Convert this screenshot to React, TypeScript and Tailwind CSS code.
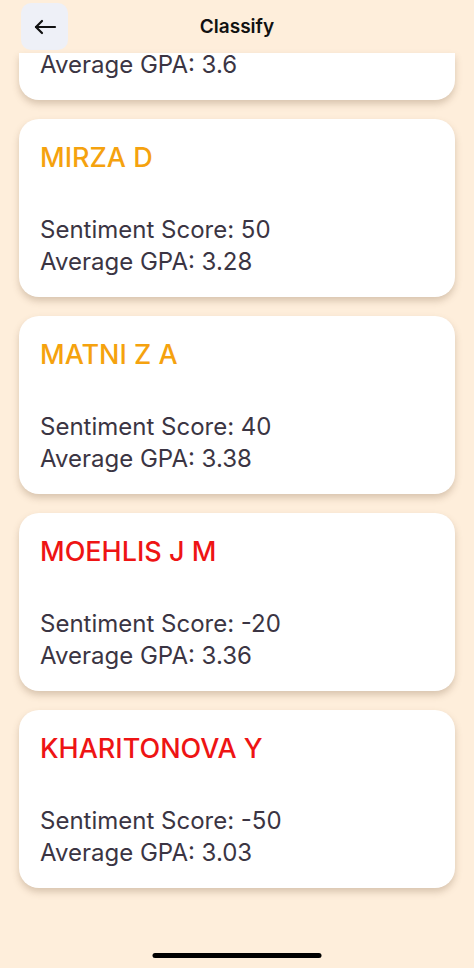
import React from "react";

const items = [
  { name: "MIRZA D", score: 50, gpa: "3.28", color: "text-[#f5a20e]" },
  { name: "MATNI Z A", score: 40, gpa: "3.38", color: "text-[#f5a20e]" },
  { name: "MOEHLIS J M", score: -20, gpa: "3.36", color: "text-[#ee1414]" },
  { name: "KHARITONOVA Y", score: -50, gpa: "3.03", color: "text-[#ee1414]" },
];

function Card({ name, score, gpa, color }: { name: string; score: number; gpa: string; color: string }) {
  return (
    <div className="bg-white rounded-[20px] mx-[19px] h-[178px] shadow-[0_4px_7px_rgba(120,90,60,0.28)] px-[21px] pt-[22px] flex flex-col">
      <div className={`text-[27px] leading-[34px] font-medium ${color}`}>{name}</div>
      <div className="mt-[39px] text-[24px] leading-[32px] text-[#3b3543]">
        <div>Sentiment Score: {score}</div>
        <div>Average GPA: {gpa}</div>
      </div>
    </div>
  );
}

export default function App() {
  return (
    <div
      className="w-[474px] h-[968px] bg-[#feeedb] relative overflow-hidden flex flex-col"
      style={{ fontFamily: "Inter, 'Noto Sans', sans-serif" }}
    >
      <div className="h-[53px] shrink-0 flex items-center">
        <button className="ml-[21px] w-[47px] h-[47px] rounded-[10px] bg-[#eef0f7] flex items-center justify-center">
          <svg width="24" height="24" viewBox="0 0 24 24" fill="none" stroke="#111" strokeWidth="2.2" strokeLinecap="round" strokeLinejoin="round">
            <path d="M22 12H3" />
            <path d="M9 6l-6 6 6 6" />
          </svg>
        </button>
        <div className="flex-1 text-center pr-[68px] pt-[2px] text-[19px] font-semibold text-[#111]">Classify</div>
      </div>
      <div className="flex flex-col gap-[19px]">
        <div className="bg-white rounded-b-[20px] mx-[19px] h-[47px] shadow-[0_4px_7px_rgba(120,90,60,0.28)] px-[21px]">
          <div className="text-[24px] leading-[24px] text-[#3b3543]">Average GPA: 3.6</div>
        </div>
        {items.map((it, i) => (
          <Card key={i} {...it} />
        ))}
      </div>
      <div className="absolute bottom-[10px] left-1/2 -translate-x-1/2 w-[169px] h-[5px] rounded-full bg-black" />
    </div>
  );
}
